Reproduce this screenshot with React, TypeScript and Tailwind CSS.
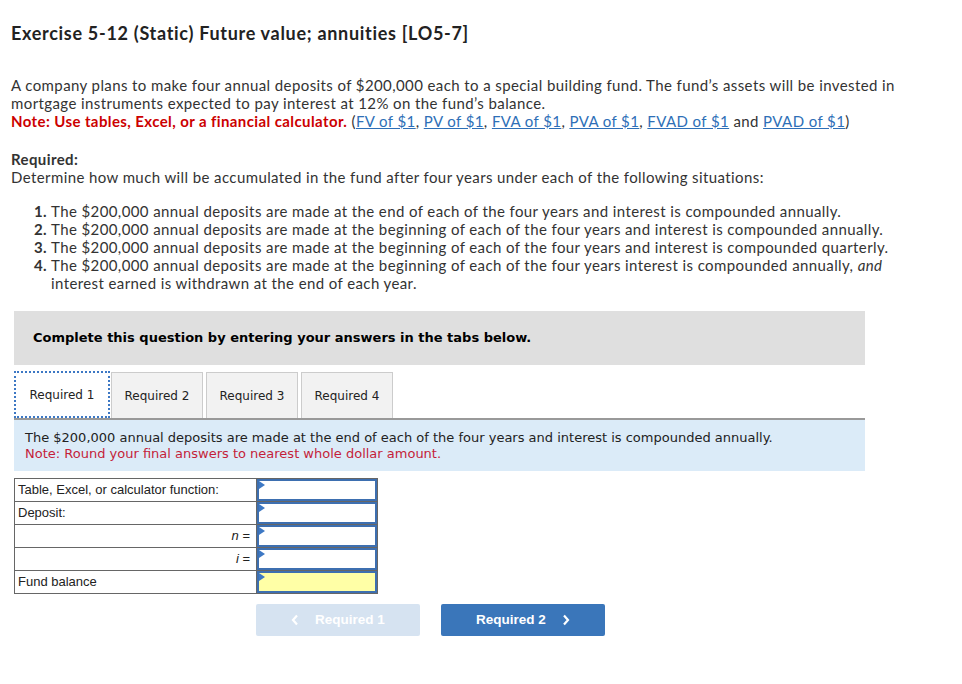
import React, { useState } from "react";

const links = ["FV of $1", "PV of $1", "FVA of $1", "PVA of $1", "FVAD of $1"];

const situations = [
  "The $200,000 annual deposits are made at the end of each of the four years and interest is compounded annually.",
  "The $200,000 annual deposits are made at the beginning of each of the four years and interest is compounded annually.",
  "The $200,000 annual deposits are made at the beginning of each of the four years and interest is compounded quarterly.",
];

const tabs = ["Required 1", "Required 2", "Required 3", "Required 4"];

const InputCell: React.FC<{ yellow?: boolean }> = ({ yellow }) => (
  <td className="p-0 border border-[#666] w-[121px]">
    <div className={`relative h-[22px] border-2 border-[#3d6fb0] ${yellow ? "bg-[#ffffa6]" : "bg-white"}`}>
      <span className="absolute left-0 top-0 w-0 h-0 border-t-[4px] border-b-[4px] border-l-[6px] border-t-transparent border-b-transparent border-l-[#3d78c4]" />
    </div>
  </td>
);

const App: React.FC = () => {
  const [active] = useState(0);

  return (
    <div className="bg-white w-[962px] h-[684px] text-[#333] font-['Lato','Open_Sans',sans-serif]">
      <div className="pl-[11px] pt-[20px]">
        <h1 className="text-[18px] font-bold text-[#222] leading-[26px] tracking-[0.7px]">
          Exercise 5-12 (Static) Future value; annuities [LO5-7]
        </h1>

        <div className="mt-[30px] text-[15px] leading-[18px] pr-[40px] tracking-[0.4px]">
          <p>
            A company plans to make four annual deposits of $200,000 each to a special building fund. The fund’s assets will be invested in mortgage instruments expected to pay interest at 12% on the fund’s balance.
          </p>
          <p>
            <span className="font-bold text-[#c00]">Note: Use tables, Excel, or a financial calculator.</span>{" "}
            (
            {links.map((l, i) => (
              <React.Fragment key={l}>
                <a className="text-[#2e6fb7] underline">{l}</a>
                {i < links.length - 1 ? ", " : ""}
              </React.Fragment>
            ))}{" "}
            and <a className="text-[#2e6fb7] underline">PVAD of $1</a>)
          </p>

          <p className="mt-[20px] font-bold">Required:</p>
          <p>Determine how much will be accumulated in the fund after four years under each of the following situations:</p>

          <ol className="mt-[16px] pl-[22px]">
            {situations.map((s, i) => (
              <li key={i} className="flex">
                <span className="font-bold w-[18px] text-right pr-[4px] shrink-0">{i + 1}.</span>
                <span>{s}</span>
              </li>
            ))}
            <li className="flex">
              <span className="font-bold w-[18px] text-right pr-[4px] shrink-0">4.</span>
              <span>
                The $200,000 annual deposits are made at the beginning of each of the four years interest is compounded annually, <i>and</i> interest earned is withdrawn at the end of each year.
              </span>
            </li>
          </ol>
        </div>
      </div>

      <div className="ml-[14px] w-[851px] mt-[19px]">
        <div className="h-[54px] bg-[#dfdfdf] flex items-center pl-[19px] font-['DejaVu_Sans',sans-serif] font-bold text-[13px] text-black">
          Complete this question by entering your answers in the tabs below.
        </div>

        <div className="mt-[6px] flex items-end gap-[3px] font-['DejaVu_Sans',sans-serif] text-[12px] text-[#222]">
          {tabs.map((t, i) => (
            <div
              key={t}
              className={
                i === active
                  ? "h-[47px] w-[96px] flex items-center justify-center bg-white border-2 border-dotted border-[#3d78c4] -mr-[2px]"
                  : "h-[46px] w-[92px] flex items-center justify-center bg-[#f2f2f2] border border-[#ccc] border-b-0"
              }
            >
              {t}
            </div>
          ))}
        </div>

        <div className="border-t-2 border-[#999] bg-[#dbebf8] h-[53px] pl-[11px] pt-[10px] font-['DejaVu_Sans',sans-serif] text-[13px] leading-[16px]">
          <p className="text-[#222]">
            The $200,000 annual deposits are made at the end of each of the four years and interest is compounded annually.
          </p>
          <p className="text-[#c41e3a]">Note: Round your final answers to nearest whole dollar amount.</p>
        </div>

        <table className="mt-[7px] border-collapse font-['Liberation_Sans',sans-serif] text-[13px] text-[#222]">
          <tbody>
            <tr>
              <td className="border border-[#666] w-[242px] h-[23px] pl-[3px]">Table, Excel, or calculator function:</td>
              <InputCell />
            </tr>
            <tr>
              <td className="border border-[#666] h-[23px] pl-[3px]">Deposit:</td>
              <InputCell />
            </tr>
            <tr>
              <td className="border border-[#666] h-[23px] pr-[6px] text-right">
                <i>n</i> =
              </td>
              <InputCell />
            </tr>
            <tr>
              <td className="border border-[#666] h-[23px] pr-[6px] text-right">
                <i>i</i> =
              </td>
              <InputCell />
            </tr>
            <tr>
              <td className="border border-[#666] h-[23px] pl-[3px]">Fund balance</td>
              <InputCell yellow />
            </tr>
          </tbody>
        </table>

        <div className="mt-[10px] ml-[242px] flex gap-[21px] font-['Liberation_Sans',sans-serif] font-bold text-[13.5px] text-white">
          <button className="w-[164px] h-[32px] rounded-[2px] bg-[#d6e3f1] flex items-center justify-center gap-[16px]">
            <svg width="8" height="12" viewBox="0 0 8 12" fill="none" stroke="white" strokeWidth="2.2">
              <path d="M6 1.5 L2 6 L6 10.5" />
            </svg>
            Required 1
          </button>
          <button className="w-[164px] h-[32px] rounded-[2px] bg-[#3a76ba] flex items-center justify-center gap-[16px]">
            Required 2
            <svg width="8" height="12" viewBox="0 0 8 12" fill="none" stroke="white" strokeWidth="2.2">
              <path d="M2 1.5 L6 6 L2 10.5" />
            </svg>
          </button>
        </div>
      </div>
    </div>
  );
};

export default App;
